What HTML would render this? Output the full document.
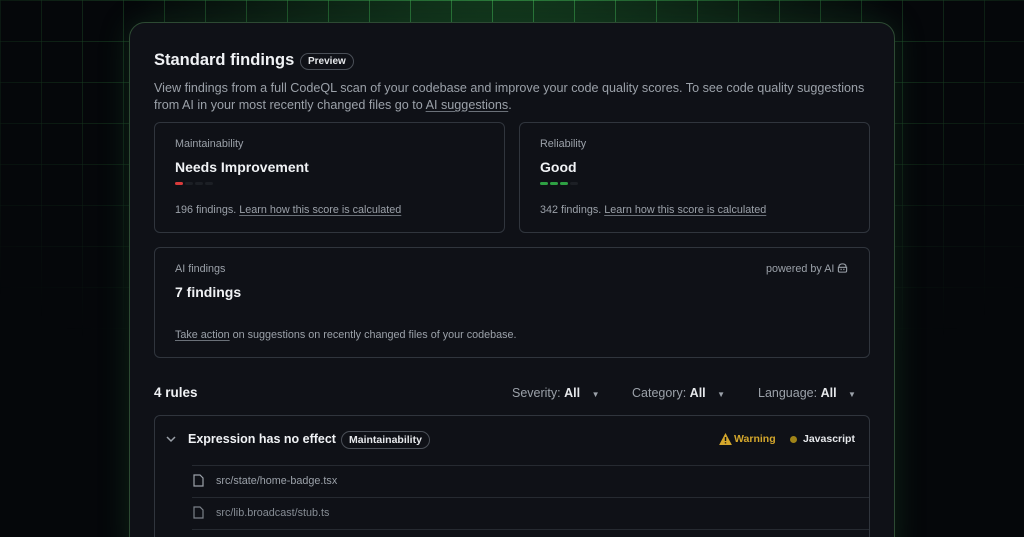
<!DOCTYPE html>
<html><head><style>
*{box-sizing:border-box;margin:0;padding:0}
html,body{width:1024px;height:537px;overflow:hidden}
body{background:#05070a;font-family:"Liberation Sans",sans-serif;color:#e6e8eb;position:relative}
.grid{position:absolute;inset:0;background-image:linear-gradient(to right,rgba(70,190,90,.5) 1px,transparent 1px),linear-gradient(to bottom,rgba(70,190,90,.5) 1px,transparent 1px);background-size:41px 41px;background-position:0 0;
-webkit-mask-image:radial-gradient(ellipse 720px 420px at 512px 0px,#000 0%,rgba(0,0,0,.5) 45%,rgba(0,0,0,.15) 75%,transparent 100%);mask-image:radial-gradient(ellipse 720px 420px at 512px 0px,#000 0%,rgba(0,0,0,.5) 45%,rgba(0,0,0,.15) 75%,transparent 100%)}
.glow{position:absolute;inset:0;background:radial-gradient(ellipse 520px 220px at 512px -40px,rgba(40,140,60,.45),transparent 75%)}
.panel{position:absolute;left:129px;top:22px;width:766px;height:540px;background:#0f1117;border:1.5px solid #2d4a33;border-radius:16px;box-shadow:0 0 30px rgba(40,120,60,.25)}
.abs{position:absolute}
h1{font-size:16.5px;font-weight:600;color:#f0f2f5}
.pill{border:1px solid #4a4f57;border-radius:10px;font-size:10px;font-weight:700;padding:2px 7px;color:#e6e8eb}
.desc{font-size:12.6px;color:#9ba1a9;line-height:17px}
u{text-decoration:underline;text-underline-offset:2px;text-decoration-color:#6a7078}
.card{position:absolute;border:1px solid #30353d;border-radius:6px;background:#0f1117}
.lbl{font-size:10.8px;color:#9ba1a9}
.big{font-size:14px;font-weight:600;color:#f0f2f5}
.small{font-size:10.8px;color:#9ba1a9}
.bar{position:absolute;top:0;height:3px;width:8px;border-radius:2px}
.f{font-size:12.5px;color:#9ba1a9}
.f b{color:#e6e8eb}
.row{position:absolute;left:192px;width:677px;border-top:1px solid #262a31}
</style></head><body>
<div class="glow"></div>
<div class="grid"></div>
<div class="panel"></div>
<h1 class="abs" style="left:154px;top:51px">Standard findings</h1>
<span class="abs pill" style="left:300px;top:53px">Preview</span>
<div class="abs desc" style="left:154px;top:80px;width:720px">View findings from a full CodeQL scan of your codebase and improve your code quality scores. To see code quality suggestions from AI in your most recently changed files go to <u>AI suggestions</u>.</div>

<div class="card" style="left:154px;top:122px;width:351px;height:111px"></div>
<div class="abs lbl" style="left:175px;top:138px">Maintainability</div>
<div class="abs big" style="left:175px;top:159px">Needs Improvement</div>
<div class="abs" style="left:175px;top:182px">
<div class="bar" style="left:0;background:#d93b3b"></div><div class="bar" style="left:10px;background:#1c1f25"></div><div class="bar" style="left:20px;background:#1c1f25"></div><div class="bar" style="left:30px;background:#1c1f25"></div></div>
<div class="abs small" style="left:175px;top:204px">196 findings. <u>Learn how this score is calculated</u></div>

<div class="card" style="left:519px;top:122px;width:351px;height:111px"></div>
<div class="abs lbl" style="left:540px;top:138px">Reliability</div>
<div class="abs big" style="left:540px;top:159px">Good</div>
<div class="abs" style="left:540px;top:182px">
<div class="bar" style="left:0;background:#2ea043"></div><div class="bar" style="left:10px;background:#2ea043"></div><div class="bar" style="left:20px;background:#2ea043"></div><div class="bar" style="left:30px;background:#1c1f25"></div></div>
<div class="abs small" style="left:540px;top:204px">342 findings. <u>Learn how this score is calculated</u></div>

<div class="card" style="left:154px;top:247px;width:716px;height:111px"></div>
<div class="abs lbl" style="left:175px;top:263px">AI findings</div>
<div class="abs small" style="left:766px;top:263px">powered by AI <svg width="11" height="10" viewBox="0 0 16 14" style="vertical-align:-1px"><path d="M3 6V4a5 3 0 0 1 10 0v2M2 6h12v5a2 2 0 0 1-2 2H4a2 2 0 0 1-2-2z M6 8v2M10 8v2" fill="none" stroke="#9ba1a9" stroke-width="1.6"/></svg></div>
<div class="abs big" style="left:175px;top:284px">7 findings</div>
<div class="abs small" style="left:175px;top:329px"><u>Take action</u> on suggestions on recently changed files of your codebase.</div>

<div class="abs" style="left:154px;top:385px;font-size:13.5px;font-weight:600;color:#f0f2f5">4 rules</div>
<div class="abs f" style="left:512px;top:386px">Severity: <b>All</b> <span style="font-size:8px;margin-left:8px">▼</span></div>
<div class="abs f" style="left:632px;top:386px">Category: <b>All</b> <span style="font-size:8px;margin-left:8px">▼</span></div>
<div class="abs f" style="left:758px;top:386px">Language: <b>All</b> <span style="font-size:8px;margin-left:8px">▼</span></div>

<div class="card" style="left:154px;top:415px;width:716px;height:140px"></div>
<svg class="abs" style="left:166px;top:435px" width="10" height="8" viewBox="0 0 10 8"><path d="M1 2l4 4 4-4" fill="none" stroke="#9ba1a9" stroke-width="1.5"/></svg>
<div class="abs" style="left:188px;top:432px;font-size:12.5px;font-weight:600;color:#f0f2f5">Expression has no effect</div>
<span class="abs pill" style="left:341px;top:431px;font-size:10.5px">Maintainability</span>
<svg class="abs" style="left:719px;top:433px" width="13" height="12" viewBox="0 0 16 15"><path d="M8 0L16 15H0z" fill="#d4a72c"/><path d="M8 5v5M8 11.5v1.5" stroke="#0f1117" stroke-width="1.8"/></svg>
<div class="abs" style="left:734px;top:433px;font-size:10.5px;font-weight:600;color:#d4a72c">Warning</div>
<div class="abs" style="left:790px;top:436px;width:7px;height:7px;border-radius:50%;background:#a08418"></div>
<div class="abs" style="left:803px;top:433px;font-size:10.5px;font-weight:600;color:#e6e8eb">Javascript</div>

<div class="row" style="top:465px;height:33px"></div>
<div class="row" style="top:497px;height:33px"></div>
<div class="row" style="top:529px;height:33px"></div>
<svg class="abs" style="left:193px;top:474px" width="11" height="13" viewBox="0 0 11 13"><path d="M1 1h6l3 3v8H1z" fill="none" stroke="#9ba1a9" stroke-width="1.2"/></svg>
<div class="abs small" style="left:216px;top:475px">src/state/home-badge.tsx</div>
<svg class="abs" style="left:193px;top:506px" width="11" height="13" viewBox="0 0 11 13"><path d="M1 1h6l3 3v8H1z" fill="none" stroke="#7a8088" stroke-width="1.2"/></svg>
<div class="abs small" style="left:216px;top:507px;color:#868c94">src/lib.broadcast/stub.ts</div>
</body></html>
